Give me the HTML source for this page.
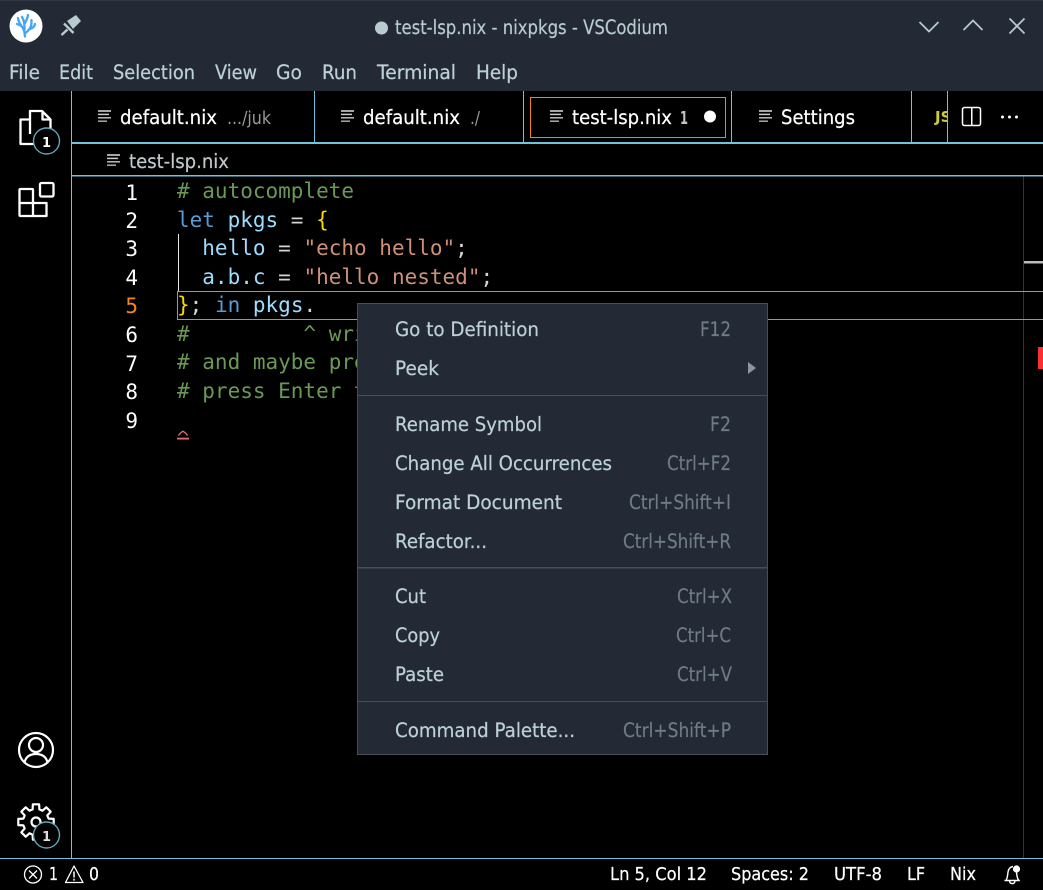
<!DOCTYPE html>
<html><head><meta charset="utf-8"><title>test-lsp.nix - nixpkgs - VSCodium</title>
<style>
html,body{margin:0;padding:0;background:#000;overflow:hidden}
svg{display:block}
.u{font-family:"DejaVu Sans","Liberation Sans",sans-serif;font-size:19.5px}
.s{font-family:"DejaVu Sans","Liberation Sans",sans-serif;font-size:18px}
.m{font-family:"DejaVu Sans Mono","Liberation Mono",monospace;font-size:21px}
.c{fill:#6a9955}.k{fill:#569cd6}.v{fill:#9cdcfe}.o{fill:#d4d4d4}.t{fill:#ce9178}.y{fill:#ffd700}
.n{fill:#fff;font-family:"DejaVu Sans Mono",monospace;font-size:21px}
.mi{fill:#bcd0d8;stroke:#bcd0d8;stroke-width:.22}
.ms{fill:#6f7c84;stroke:#6f7c84;stroke-width:.18}
.bar{fill:#bcd0d8;stroke:#bcd0d8;stroke-width:.22}
.w{fill:#fff;stroke:#fff;stroke-width:.22}
</style></head><body>
<svg width="1043" height="890" viewBox="0 0 1043 890" xmlns="http://www.w3.org/2000/svg" xml:space="preserve">
<rect width="1043" height="890" fill="#000"/>
<rect width="1043" height="91" fill="#232a35"/>
<rect width="1043" height="1" fill="#2f3641"/>

<!-- logo -->
<circle cx="26" cy="26" r="16.5" fill="#fff"/>
<g fill="none" stroke="#42a5f5" stroke-width="2.3" stroke-linecap="round" stroke-linejoin="round">
<path d="M25 36.5 C24.5 32 24 29 21.5 26 C20 24 18.5 22 18 18"/>
<path d="M21.5 26 L17 24"/>
<path d="M24.5 30 C24.5 25 24.5 21 22 17"/>
<path d="M24.5 24 C26 21 27.5 19 28 15"/>
<path d="M25.5 33 C28 31 30 29 31 26 C31.5 24 31.5 22 31.5 20"/>
<path d="M30 29 C32.5 28 34.5 27 35 24"/>
</g>
<!-- pin -->
<path d="M67 21 L76 15 L81 21 L73 29 Z" fill="#b8ccd0"/>
<path d="M64 23.5 L73.5 33 M67.5 29.5 L61.5 35" stroke="#b8ccd0" stroke-width="2.4" fill="none"/>

<!-- title -->
<circle cx="381.5" cy="28" r="6.5" fill="#b8ccd0"/>
<text class="u" x="395" y="34" fill="#b8ccd0" stroke="#b8ccd0" stroke-width=".2" textLength="273" lengthAdjust="spacingAndGlyphs">test-lsp.nix - nixpkgs - VSCodium</text>
<!-- window controls -->
<g fill="none" stroke="#b8ccd0" stroke-width="1.7">
<path d="M919.5 22 L929 31.5 L938.5 22"/>
<path d="M963.5 30 L973 20.5 L982.5 30"/>
<path d="M1009.5 18.5 L1024.5 33.5 M1024.5 18.5 L1009.5 33.5"/>
</g>

<!-- menu bar -->
<g class="u bar">
<text x="9" y="79" textLength="31" lengthAdjust="spacingAndGlyphs">File</text>
<text x="59" y="79" textLength="34" lengthAdjust="spacingAndGlyphs">Edit</text>
<text x="113" y="79" textLength="82" lengthAdjust="spacingAndGlyphs">Selection</text>
<text x="215" y="79" textLength="42" lengthAdjust="spacingAndGlyphs">View</text>
<text x="276" y="79" textLength="26" lengthAdjust="spacingAndGlyphs">Go</text>
<text x="322" y="79" textLength="35" lengthAdjust="spacingAndGlyphs">Run</text>
<text x="377" y="79" textLength="79" lengthAdjust="spacingAndGlyphs">Terminal</text>
<text x="476" y="79" textLength="42" lengthAdjust="spacingAndGlyphs">Help</text>
</g>

<!-- frame lines -->
<g fill="#6fc3df">
<rect x="71" y="91" width="1" height="767"/>
<rect x="72" y="142" width="971" height="2"/>
<rect x="72" y="175" width="971" height="1.5"/>
<rect x="314" y="91" width="1" height="51"/>
<rect x="523" y="91" width="1" height="51"/>
<rect x="731" y="91" width="1" height="51"/>
<rect x="911" y="91" width="1" height="51"/>
<rect x="947" y="91" width="1" height="51"/>
<rect x="0" y="858" width="1043" height="1"/>
</g>
<rect x="530.5" y="97.5" width="195" height="40" fill="none" stroke="#f38518"/>

<!-- tab file icons -->
<defs><g id="fi" fill="none" stroke-width="1.5"><path d="M0 1H13" stroke="#ddd"/><path d="M0 4.4H11" stroke="#ccc"/><path d="M0 7.8H13" stroke="#bbb"/><path d="M0 11.2H9" stroke="#aaa"/></g></defs>
<use href="#fi" x="98" y="110"/>
<use href="#fi" x="341" y="110"/>
<use href="#fi" x="550" y="110"/>
<use href="#fi" x="759" y="110"/>
<use href="#fi" x="107" y="154"/>

<g class="u">
<text class="w" x="120" y="124" textLength="97" lengthAdjust="spacingAndGlyphs">default.nix</text>
<text x="227" y="124" style="font-size:17.5px" fill="#9a9a9a" textLength="44" lengthAdjust="spacingAndGlyphs">.../juk</text>
<text class="w" x="363" y="124" textLength="97" lengthAdjust="spacingAndGlyphs">default.nix</text>
<text x="470" y="124" style="font-size:17.5px" fill="#9a9a9a" textLength="10" lengthAdjust="spacingAndGlyphs">./</text>
<text class="w" x="572" y="124" textLength="100" lengthAdjust="spacingAndGlyphs">test-lsp.nix</text>
<text x="680" y="124" style="font-size:18px;font-weight:bold" fill="#c4c4c4" textLength="8" lengthAdjust="spacingAndGlyphs">1</text>
<text class="w" x="781" y="124" textLength="74" lengthAdjust="spacingAndGlyphs">Settings</text>
</g>
<circle cx="710" cy="116.5" r="6" fill="#fff"/>
<svg x="930" y="100" width="17" height="30"><text x="5" y="22" style="font-family:'DejaVu Sans',sans-serif;font-size:15px;font-weight:bold" fill="#cbcb41">JS</text></svg>
<rect x="962.5" y="107.5" width="18" height="18" rx="2" fill="none" stroke="#fff" stroke-width="1.5"/>
<rect x="971" y="108" width="1.5" height="17" fill="#fff"/>
<circle cx="1002.5" cy="117" r="1.5" fill="#fff"/><circle cx="1009.5" cy="117" r="1.5" fill="#fff"/><circle cx="1016.5" cy="117" r="1.5" fill="#fff"/>

<!-- breadcrumb -->
<text class="u" x="129" y="168" fill="#c0c8cc" stroke="#c0c8cc" stroke-width=".2" textLength="100" lengthAdjust="spacingAndGlyphs">test-lsp.nix</text>

<!-- activity bar -->
<g fill="none" stroke="#fff" stroke-width="2.3" stroke-linejoin="round">
<path d="M30 134 V111 H42 L50.5 119.5 V132"/>
<path d="M42.5 111 V119.5 H50.5"/>
<path d="M30 119.5 H20.5 V144 H36.5 V140"/>
</g>
<circle cx="46.5" cy="141" r="13" fill="#000" stroke="#5fa9bd" stroke-width="1.4"/>
<text x="46.5" y="147" text-anchor="middle" fill="#fff" style="font-family:'DejaVu Sans',sans-serif;font-size:13px;font-weight:bold">1</text>

<g fill="none" stroke="#fff" stroke-width="2.3" stroke-linejoin="round">
<rect x="40" y="183" width="13.5" height="13.5" rx="1.5"/>
<path d="M19.5 203 V190 Q19.5 189 20.5 189 H32 Q33 189 33 190 V216 H20.5 Q19.5 216 19.5 215 V203 H46.5 V216 H33"/>
</g>
<g fill="none" stroke="#fff" stroke-width="2.2">
<circle cx="36" cy="750" r="17"/>
<circle cx="36" cy="745" r="7"/>
<path d="M24.5 762.5 C26 756 31 754 36 754 C41 754 46 756 47.5 762.5"/>
</g>
<g fill="none" stroke="#fff" stroke-width="2.2" stroke-linejoin="round">
<path d="M32.9 804.3 L39.1 804.3 L39.4 809.4 L42.5 810.7 L46.3 807.3 L50.7 811.7 L47.3 815.5 L48.6 818.6 L53.7 818.9 L53.7 825.1 L48.6 825.4 L47.3 828.5 L50.7 832.3 L46.3 836.7 L42.5 833.3 L39.4 834.6 L39.1 839.7 L32.9 839.7 L32.6 834.6 L29.5 833.3 L25.7 836.7 L21.3 832.3 L24.7 828.5 L23.4 825.4 L18.3 825.1 L18.3 818.9 L23.4 818.6 L24.7 815.5 L21.3 811.7 L25.7 807.3 L29.5 810.7 L32.6 809.4 Z"/>
<circle cx="36" cy="822" r="4.5"/>
</g>
<circle cx="46.5" cy="835" r="13" fill="#000" stroke="#5fa9bd" stroke-width="1.4"/>
<text x="46.5" y="841" text-anchor="middle" fill="#ddd" style="font-family:'DejaVu Sans',sans-serif;font-size:13px;font-weight:bold">1</text>

<!-- editor decorations -->
<rect x="1023" y="176.5" width="1" height="681.5" fill="#333"/>
<rect x="1024" y="261" width="19" height="2.5" fill="#bbb"/>
<rect x="1038" y="347" width="5" height="22" fill="#f92f32"/>
<rect x="177.5" y="291.5" width="866" height="28" fill="none" stroke="#f38518"/>
<rect x="178" y="234" width="1" height="57" fill="#e8e8e8"/>

<!-- line numbers -->
<g class="n" text-anchor="end">
<text x="138" y="200">1</text><text x="138" y="228">2</text><text x="138" y="256">3</text>
<text x="138" y="285">4</text><text x="138" y="313" style="fill:#f38518">5</text><text x="138" y="342">6</text>
<text x="138" y="371">7</text><text x="138" y="399">8</text><text x="138" y="428">9</text>
</g>

<!-- code -->
<g class="m" xml:space="preserve">
<text class="c" x="177" y="198"># autocomplete</text>
<text x="177" y="227" xml:space="preserve"><tspan class="k">let</tspan><tspan class="v"> pkgs</tspan><tspan class="o"> = </tspan><tspan class="y">{</tspan></text>
<text x="177" y="255" xml:space="preserve"><tspan class="v">  hello</tspan><tspan class="o"> = </tspan><tspan class="t">"echo hello"</tspan><tspan class="o">;</tspan></text>
<text x="177" y="284" xml:space="preserve"><tspan class="v">  a.b.c</tspan><tspan class="o"> = </tspan><tspan class="t">"hello nested"</tspan><tspan class="o">;</tspan></text>
<text x="177" y="312" xml:space="preserve"><tspan class="y">}</tspan><tspan class="o">; </tspan><tspan class="k">in</tspan><tspan class="v"> pkgs</tspan><tspan class="o">.</tspan></text>
<text class="c" x="177" y="341" xml:space="preserve">#         ^ write</text>
<text class="c" x="177" y="369" xml:space="preserve"># and maybe press</text>
<text class="c" x="177" y="398" xml:space="preserve"># press Enter to</text>
</g>
<path d="M177 438.6 H189" stroke="#e07070" stroke-width="1.8"/>
<path d="M178.5 435.5 Q180 433 183 431.2 Q186 433 187.5 435.5" fill="none" stroke="#e07070" stroke-width="1.2"/>

<!-- context menu -->
<rect x="357.5" y="303.5" width="410" height="451" fill="#232a35" stroke="#454e59" stroke-width="1"/>
<g fill="#454e59">
<rect x="358" y="395" width="409" height="1"/>
<rect x="358" y="567" width="409" height="1.5"/>
<rect x="358" y="701" width="409" height="1"/>
</g>
<g class="u mi">
<text x="395" y="336" textLength="144" lengthAdjust="spacingAndGlyphs">Go to Definition</text>
<text x="395" y="375" textLength="44" lengthAdjust="spacingAndGlyphs">Peek</text>
<text x="395" y="431" textLength="147" lengthAdjust="spacingAndGlyphs">Rename Symbol</text>
<text x="395" y="470" textLength="217" lengthAdjust="spacingAndGlyphs">Change All Occurrences</text>
<text x="395" y="509" textLength="167" lengthAdjust="spacingAndGlyphs">Format Document</text>
<text x="395" y="548" textLength="92" lengthAdjust="spacingAndGlyphs">Refactor...</text>
<text x="395" y="603" textLength="31" lengthAdjust="spacingAndGlyphs">Cut</text>
<text x="395" y="642" textLength="45" lengthAdjust="spacingAndGlyphs">Copy</text>
<text x="395" y="681" textLength="49" lengthAdjust="spacingAndGlyphs">Paste</text>
<text x="395" y="737" textLength="180" lengthAdjust="spacingAndGlyphs">Command Palette...</text>
</g>
<g class="u ms">
<text x="700" y="336" textLength="31" lengthAdjust="spacingAndGlyphs">F12</text>
<text x="710" y="431" textLength="21" lengthAdjust="spacingAndGlyphs">F2</text>
<text x="667" y="470" textLength="64" lengthAdjust="spacingAndGlyphs">Ctrl+F2</text>
<text x="629" y="509" textLength="102" lengthAdjust="spacingAndGlyphs">Ctrl+Shift+I</text>
<text x="623" y="548" textLength="108" lengthAdjust="spacingAndGlyphs">Ctrl+Shift+R</text>
<text x="677" y="603" textLength="55" lengthAdjust="spacingAndGlyphs">Ctrl+X</text>
<text x="676" y="642" textLength="55" lengthAdjust="spacingAndGlyphs">Ctrl+C</text>
<text x="677" y="681" textLength="55" lengthAdjust="spacingAndGlyphs">Ctrl+V</text>
<text x="623" y="737" textLength="108" lengthAdjust="spacingAndGlyphs">Ctrl+Shift+P</text>
</g>
<path d="M748 362 L756 368 L748 374 Z" fill="#8a969c"/>

<!-- status bar -->
<g fill="none" stroke="#fff" stroke-width="1.3">
<circle cx="33" cy="874.5" r="8.5"/>
<path d="M29 870.5 L37 878.5 M37 870.5 L29 878.5"/>
<path d="M74 866 L83 882.5 H65.5 Z" stroke-linejoin="round"/>
</g>
<path d="M74 871.5 V877.5 M74 878.8 V880.6" stroke="#fff" stroke-width="1.5"/>
<g class="s w">
<text x="49" y="880" textLength="9" lengthAdjust="spacingAndGlyphs">1</text>
<text x="89" y="880" textLength="10" lengthAdjust="spacingAndGlyphs">0</text>
<text x="610" y="880" textLength="97" lengthAdjust="spacingAndGlyphs">Ln 5, Col 12</text>
<text x="731" y="880" textLength="78" lengthAdjust="spacingAndGlyphs">Spaces: 2</text>
<text x="834" y="880" textLength="48" lengthAdjust="spacingAndGlyphs">UTF-8</text>
<text x="907" y="880" textLength="18" lengthAdjust="spacingAndGlyphs">LF</text>
<text x="950" y="880" textLength="26" lengthAdjust="spacingAndGlyphs">Nix</text>
</g>
<g fill="none" stroke="#fff" stroke-width="1.4">
<path d="M1006 880.5 C1007.5 878 1007.5 876 1008 872 C1008.5 868.5 1010 867 1013 866.5 M1016.5 872 C1017 876 1017 878 1019 880.5 H1004.5"/>
<path d="M1009.5 881 C1010 884.5 1014.5 884.5 1015 881"/>
</g>
<circle cx="1016.5" cy="869" r="3.6" fill="#fff"/>
</svg>
</body></html>
